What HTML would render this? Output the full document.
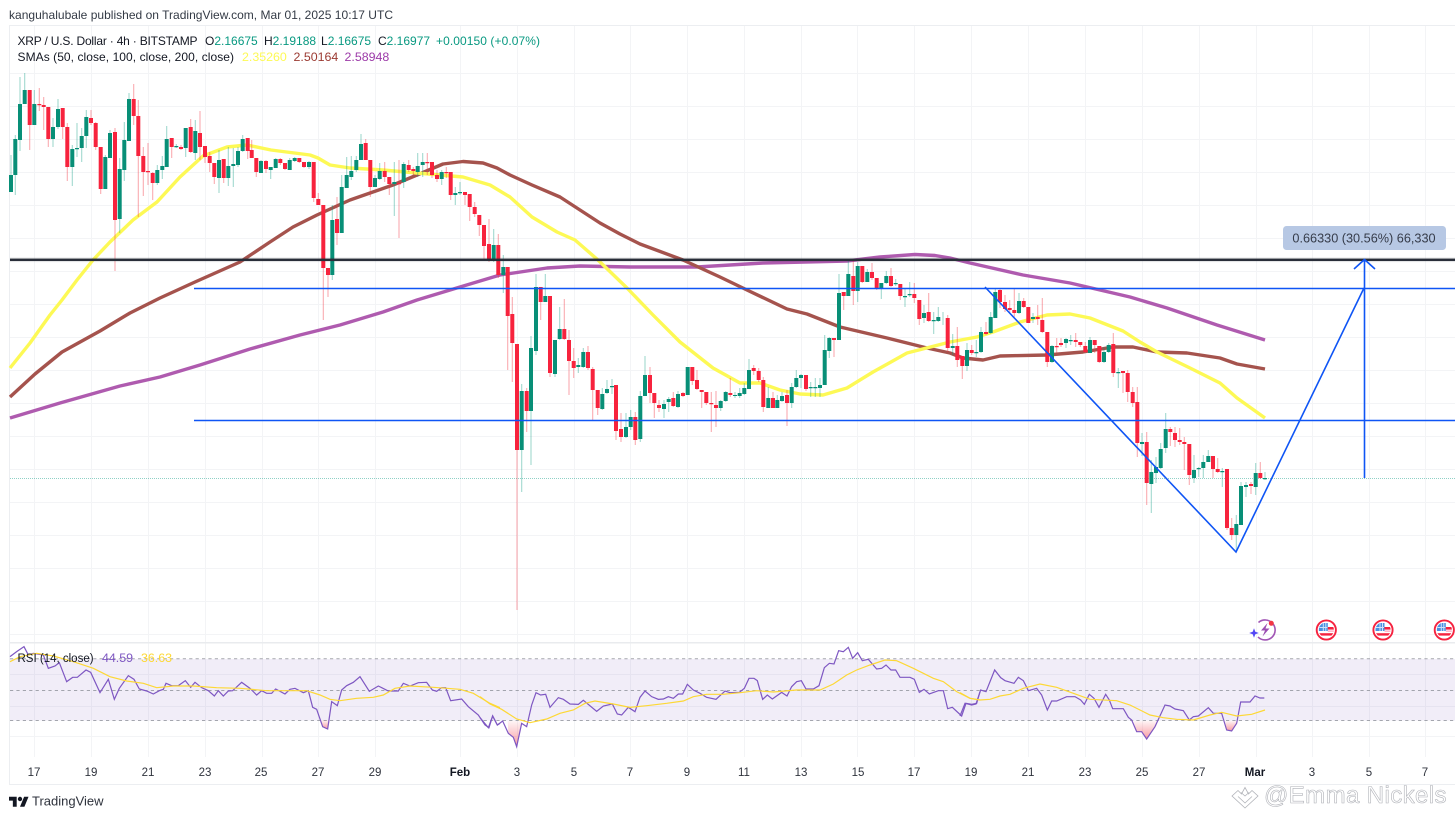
<!DOCTYPE html>
<html lang="en"><head><meta charset="utf-8"><title>XRP / U.S. Dollar chart</title>
<style>
html,body{margin:0;padding:0;background:#fff;width:1455px;height:818px;overflow:hidden}
svg{display:block;font-family:"Liberation Sans",sans-serif;filter:blur(.35px)}
.r{vector-effect:non-scaling-stroke;fill:none}
</style></head><body>
<svg width="1455" height="818" viewBox="0 0 1455 818" xmlns="http://www.w3.org/2000/svg">
<defs>
<linearGradient id="rg" x1="0" y1="0" x2="0" y2="1"><stop offset="0" stop-color="#f23645" stop-opacity=".05"/><stop offset="1" stop-color="#f23645" stop-opacity=".5"/></linearGradient>
<clipPath id="fc"><circle cx="0" cy="0" r="7.6"/></clipPath>
<g id="flag"><circle r="9.6" fill="#fff" stroke="#f5223f" stroke-width="1.9"/><g clip-path="url(#fc)"><rect x="-8" y="-8" width="16" height="16" fill="#fff"/><rect x="-7.5" y="-7" width="9" height="8" fill="#4a90e2"/><rect x="1.5" y="-3" width="7" height="2.6" fill="#f5223f"/><rect x="1.5" y="0.6" width="7" height="1" fill="#f8a"/><rect x="-8" y="3.2" width="16" height="2.4" fill="#f5223f"/><rect x="-3.5" y="-7" width="1" height="8" fill="#cfe3f8"/><rect x="-1" y="-7" width="1" height="8" fill="#cfe3f8"/><rect x="-7" y="-3" width="8" height="1" fill="#cfe3f8"/></g></g>
</defs>
<rect width="1455" height="818" fill="#fff"/>
<text x="9" y="19" font-size="12" fill="#333a45" textLength="384">kanguhalubale published on TradingView.com, Mar 01, 2025 10:17 UTC</text>
<path d="M9 25.5H1455M9.5 25V784M9 784.5H1455" stroke="#eceef1" stroke-width="1" fill="none"/>
<path d="M10 73.5H1455M10 106.5H1455M10 139.5H1455M10 172.5H1455M10 205.5H1455M10 238.5H1455M10 271.5H1455M10 304.5H1455M10 337.5H1455M10 370.5H1455M10 403.5H1455M10 436.5H1455M10 469.5H1455M10 502.5H1455M10 535.5H1455M10 568.5H1455M10 601.5H1455M10 634.5H1455M10 674.5H1455M10 706.5H1455M10 736.5H1455" stroke="#f3f4f6" stroke-width="1"/>
<path d="M34.5 26V757M91.5 26V757M148.5 26V757M205.5 26V757M262.5 26V757M318.5 26V757M375.5 26V757M460.5 26V757M517.5 26V757M574.5 26V757M630.5 26V757M687.5 26V757M744.5 26V757M801.5 26V757M857.5 26V757M914.5 26V757M971.5 26V757M1028.5 26V757M1085.5 26V757M1142.5 26V757M1199.5 26V757M1256.5 26V757M1312.5 26V757M1369.5 26V757M1425.5 26V757" stroke="#f3f4f6" stroke-width="1"/>
<rect x="10" y="642" width="1445" height="1.5" fill="#e9ebee"/>

<line x1="10" y1="478.5" x2="1455" y2="478.5" stroke="#089981" stroke-opacity=".45" stroke-width="1" stroke-dasharray="1 1"/>

<!-- SMAs below the candles -->
<polyline fill="none" stroke="#ab52ab" stroke-opacity=".95" stroke-width="3.4" stroke-linejoin="round" points="10,418 60,403 120,386 160,377 200,365 250,349 300,335 340,325 383,312 417,300 460,287 500,275 547,268 580,266 630,267 697,267 763,263 847,261 880,257 915,254.5 935,255.5 950,258 970,263 1023,275 1070,283 1130,297 1167,308 1217,325 1265,340"/>
<polyline fill="none" stroke="#a5534d" stroke-width="3.4" stroke-linejoin="round" points="10,397 35,374 62,352 100,331 130,313 160,298 195,282 240,262 270,242 293,227 317,215 350,200 393,185 417,175 443,164 463,161.5 483,163 497,168 510,175 532,185 560,197 580,210 600,223 620,234 640,244 683,260 720,277 747,290 787,309 807,314 840,327 887,338 927,348 950,353 963,358 983,360 1000,356 1047,355 1083,352 1113,347 1133,347 1157,352 1187,353 1220,358 1237,364 1265,369"/>
<polyline fill="none" stroke="#fdf955" stroke-width="3.4" stroke-linejoin="round" points="10,368 30,343 50,315 62,300 77,280 93,260 110,242 133,220 157,202 180,177 203,156 227,147 247,145 271,150 310,155 318,158 330,165 350,168 383,170 417,173 463,177 490,185 510,197 532,217 557,232 575,240 598,260 627,288 653,315 680,342 713,368 740,383 760,383 780,390 800,394 823,395 847,388 873,372 907,353 950,342 977,337 993,332 1020,322 1047,315 1070,314 1090,318 1123,331 1140,342 1157,352 1190,368 1220,383 1237,398 1265,418"/>

<!-- wicks -->
<path fill="none" stroke="#089981" stroke-opacity=".38" stroke-width="1.1" d="M11 155V192M15.3 135V195M20 77V151M24.7 73V104M34.3 90V125M53 118V147M58 99V129M72.3 145V186M77 123V157M81.7 128V162M86.3 110V148M105.3 155V189M110 130V158M119.7 158V233M124.3 122V181M129 93V141M157.3 165V185M162.3 156V179M166.7 126V167M176.3 144V148M185.7 128V157M195.3 120V160M219 150V193M228.3 147V186M233.3 148V187M238 147V167M242.7 135V152M261 160V173M270.7 167V179M275.7 158V168M289.7 158V170M294.7 157V162M309 161V169M332.3 205V280M341.7 175V233M346.7 157V188M351.3 156V180M356.3 156V172M361 134V160M375 175V187M379.7 163V180M394.3 162V216M403.7 162V188M417.7 153V177M422.7 153V177M441.7 170V185M455.3 187V205M460 182V195M493.7 229V262M503.3 255V293M521.7 384V492M531 336V465M536 274V355M545.3 274V302M555 340V377M559.7 307V340M578.3 358V373M583.3 348V368M602.3 388V410M607 380V394M612 379V394M626 413V438M630.7 410V430M640.3 391V442M645 356V396M664 400V418M668.7 397V412M678 391V408M687.7 367V395M720.7 400V411M725.7 391V402M735 392V398M739.7 388V398M744.3 383V395M749 359V389M768.3 387V408M777.3 395V408M782 392V402M791.7 383V408M796.3 370V388M801 374V388M810.7 382V397M815.3 378V397M820 378V397M824.7 335V385M829.3 337V358M839 274V340M848.3 260V296M857.7 262V302M867.3 269V282M881.3 283V299M886.3 271V284M895.7 279V286M905 288V307M909.7 282V297M924 305V323M933.7 312V334M938.3 307V322M943 312V325M952.7 334V355M967 343V371M976.3 340V357M981 327V353M990.7 312V334M995.3 288V318M1019 293V314M1033 313V323M1052 345V363M1066 338V348M1070.7 335V345M1090 337V353M1104 347V363M1108.7 343V353M1118.3 368V388M1142 433V456M1151.3 460V513M1156 457V483M1160.7 443V469M1165.7 413V453M1194 455V483M1198.7 467V477M1203.3 455V478M1208.3 450V462M1222.3 468V487M1236.3 515V552M1241 482V525M1246 482V497M1255.7 463V495M1265 472V480"/>
<path fill="none" stroke="#f23645" stroke-opacity=".42" stroke-width="1.1" d="M29.7 90V150M39.3 88V111M43.7 97V130M48.3 107V147M62.7 108V139M67.3 123V181M91 110V125M95.7 122V150M100.7 147V194M115 128V271M133.7 84V125M138.3 100V217M143.3 147V196M148 143V185M152.7 172V200M171.7 138V158M181 145V150M190.7 119V153M200 111V160M205 146V163M209.7 152V172M214.3 163V184M223.7 159V183M247.7 138V159M251.7 140V158M256.3 158V177M266 160V173M280.3 158V165M285 163V170M299.3 158V163M304 162V168M313.7 162V202M318.3 193V205M323.3 205V320M328 268V297M337 197V245M365.7 139V160M370.3 160V197M384.7 162V182M389.3 177V195M399 160V238M408.7 160V172M413.3 167V175M427.3 153V175M432 162V178M437 170V182M446.3 167V178M450.7 172V200M465 192V205M469.7 194V221M474.7 202V217M479.3 215V236M484 225V261M489 219V262M498.3 234V278M507.7 267V370M512.3 297V382M517 344V610M526.7 388V432M540.7 287V320M550 296V377M564.3 299V340M569 330V395M573.7 348V378M588 346V370M592.7 367V421M597.7 390V415M616 385V440M621 413V442M635.3 412V445M650 367V403M654.3 393V418M659 400V412M673.3 392V407M683 392V397M692.3 367V385M697 370V390M701.7 390V408M706.3 392V405M711.3 392V432M716 391V427M730.3 378V397M753.7 365V375M758.7 368V382M763.3 377V412M773 392V408M787 390V426M806 375V391M834 338V357M843.7 292V310M853.3 260V305M862.3 266V283M872 263V280M876.7 278V290M891 268V287M900.3 284V300M914.3 283V303M919.3 300V325M928.7 293V322M947.7 315V352M957.3 327V367M962.3 356V379M971.7 345V355M986 322V335M1000 288V308M1005 295V312M1009.7 300V313M1014.3 288V317M1023.7 298V308M1028.3 307V323M1037.7 305V325M1042.3 298V333M1047.3 332V367M1056.7 338V353M1061 338V347M1075.7 333V347M1080.3 342V347M1085.3 342V353M1094.7 340V353M1099.3 346V363M1113.3 333V377M1123 371V393M1127.7 370V402M1132.7 387V407M1137.3 387V457M1146.7 432V505M1170.3 427V446M1175 427V447M1179.7 428V445M1184.3 437V470M1189.3 444V485M1213 456V478M1217.7 458V473M1227 469V530M1231.7 518V540M1251 482V494M1260.3 462V479"/>
<!-- bodies -->
<path fill="none" stroke="#088f77" stroke-width="4" d="M11 175V192M15.3 139V175M20 104V140M24.7 90V104M34.3 104V125M53 127V139M58 109V127M72.3 149V167M77 148V149.2M81.7 136V148M86.3 117V136M105.3 157V189M110 133V158M119.7 169V219M124.3 140V170M129 99V141M157.3 170V183M162.3 166V170M166.7 139V167M176.3 146V147.2M185.7 128V148M195.3 131V153M219 160V178M228.3 166V178M233.3 164V166M238 151V165M242.7 139V151M261 161V173M270.7 167V170M275.7 159V168M289.7 160V170M294.7 158V161M309 162V167M332.3 220V275M341.7 187V233M346.7 175V188M351.3 171V177M356.3 160V170M361 144V160M375 178V187M379.7 171V179M394.3 182V184M403.7 164V182M417.7 166V172M422.7 162V165M441.7 172V179M455.3 193V195M460 192V193.2M493.7 245V261M503.3 267V275M521.7 391V450M531 348V411M536 287V351M545.3 296V302M555 340V374M559.7 329V339M578.3 365V367M583.3 352V367M602.3 394V409M607 389V393M612 386V387.2M626 427V437M630.7 417V427M640.3 396V439M645 375V396M664 404V409M668.7 399V402M678 394V407M687.7 367V395M720.7 401V408M725.7 392V401M735 395V396M739.7 393V396M744.3 388V394M749 370V389M768.3 398V408M777.3 400V408M782 396V401M791.7 387V403M796.3 378V387M801 375V378M810.7 387V388.2M815.3 387V388.2M820 385V388M824.7 350V385M829.3 338V351M839 293V340M848.3 274V296M857.7 266V291M867.3 272V282M881.3 283V289M886.3 276V283M895.7 283V284.2M905 296V297.2M909.7 294V295.2M924 313V318M933.7 320V321.2M938.3 317V321M952.7 346V348M967 350V366M976.3 352V353.2M981 332V352M990.7 317V333M995.3 292V318M1019 301V313M1033 317V319M1052 346V362M1066 339V343M1070.7 340V341.2M1090 340V353M1104 352V362M1108.7 345V352M1118.3 372V373.2M1142 442V444M1151.3 472V484M1156 467V473M1160.7 449V468M1165.7 429V448M1194 470V478M1198.7 468V469.2M1203.3 462V468M1208.3 456V462M1222.3 471V472.2M1236.3 524V535M1241 486V525M1246 485V487M1255.7 473V487M1265 478V479.2"/>
<path fill="none" stroke="#f7233d" stroke-width="4" d="M29.7 90V125M39.3 104V105.2M43.7 105V107M48.3 107V139M62.7 108V127M67.3 127V167M91 118V123M95.7 123V147M100.7 147V189M115 132V220M133.7 99V116M138.3 116V156M143.3 156V172M148 171V172.2M152.7 173V183M171.7 138V147M181 147V149M190.7 127V152M200 133V147M205 146V157M209.7 156V163M214.3 163V177M223.7 159V178M247.7 138V151M251.7 150V158M256.3 158V172M266 161V169M280.3 159V163M285 163V169M299.3 158V162M304 162V167M313.7 162V198M318.3 199V205M323.3 205V268M328 268V275M337 219V233M365.7 143V160M370.3 160V187M384.7 171V177M389.3 177V184M399 183V184.2M408.7 165V170M413.3 169V171M427.3 162V163.2M432 162V175M437 175V179M446.3 172V173.2M450.7 172V195M465 192V195M469.7 194V207M474.7 207V214M479.3 215V225M484 225V246M489 244V260M498.3 245V275M507.7 267V316M512.3 314V343M517 344V450M526.7 391V411M540.7 287V302M550 296V373M564.3 329V339M569 340V361M573.7 361V368M588 352V368M592.7 369V390M597.7 390V408M616 385V431M621 429V437M635.3 417V440M650 375V393M654.3 393V403M659 405V408M673.3 398V406M683 393V396M692.3 367V381M697 380V389M701.7 390V392M706.3 392V403M711.3 403V404.2M716 405V408M730.3 393V395M753.7 368V371M758.7 371V380M763.3 380V407M773 398V408M787 395V403M806 375V389M834 338V340M843.7 292V296M853.3 276V291M862.3 266V282M872 272V278M876.7 278V289M891 276V286M900.3 284V296M914.3 294V298M919.3 300V319M928.7 312V321M947.7 318V348M957.3 346V360M962.3 356V366M971.7 350V353M986 332V334M1000 290V302M1005 302V309M1009.7 308V310M1014.3 310V313M1023.7 301V307M1028.3 307V323M1037.7 317V319M1042.3 320V332M1047.3 332V362M1056.7 346V347.2M1061 343V345M1075.7 340V342M1080.3 342V345M1085.3 346V352M1094.7 340V345M1099.3 346V362M1113.3 344V373M1123 371V373M1127.7 373V392M1132.7 392V403M1137.3 402V443M1146.7 442V483M1170.3 429V432M1175 433V440M1179.7 440V442M1184.3 442V444M1189.3 444V475M1213 456V469M1217.7 469V472M1227 469V528M1231.7 528V535M1251 484V486M1260.3 473V478"/>

<!-- horizontal levels -->
<rect x="10" y="258.6" width="1445" height="2.4" fill="#2a2e39"/>
<rect x="10" y="257.5" width="1445" height="4.6" fill="#2a2e39" opacity=".12"/>
<path d="M194 288.5H1455M194 420.5H1455" stroke="#0f55f5" stroke-width="1.6" fill="none"/>

<!-- forecast drawing -->
<path d="M985 287L1236 552L1364 288" fill="none" stroke="#0f55f5" stroke-width="1.6"/>
<path d="M1364.5 478V260M1354 269L1364.5 259.5L1375 269" fill="none" stroke="#0f55f5" stroke-width="1.6"/>
<rect x="1283" y="226" width="163" height="24" rx="3.5" fill="#b7c8e4"/>
<text x="1364" y="242.5" font-size="12.7" text-anchor="middle" fill="#363c4a">0.66330 (30.56%) 66,330</text>

<!-- legend -->
<g font-size="12" fill="#131722">
<text x="17.5" y="45" textLength="180" lengthAdjust="spacing">XRP / U.S. Dollar · 4h · BITSTAMP</text>
<text x="205" y="45">O<tspan fill="#089981">2.16675</tspan></text>
<text x="264" y="45">H<tspan fill="#089981">2.19188</tspan></text>
<text x="321" y="45">L<tspan fill="#089981">2.16675</tspan></text>
<text x="378" y="45">C<tspan fill="#089981">2.16977</tspan></text>
<text x="436" y="45" fill="#089981" textLength="104">+0.00150 (+0.07%)</text>
<text x="17.5" y="61" textLength="216.5" lengthAdjust="spacing">SMAs (50, close, 100, close, 200, close)</text>
<text x="242" y="61" fill="#fdf955" font-size="12.4">2.35260</text>
<text x="293.5" y="61" fill="#9b3a32" font-size="12.4">2.50164</text>
<text x="344.5" y="61" fill="#9c3aa8" font-size="12.4">2.58948</text>
</g>

<!-- RSI pane -->
<rect x="10" y="659" width="1445" height="61.5" fill="#7e57c2" fill-opacity=".11"/>
<path d="M10 658.7H1455M10 690.5H1455M10 720.5H1455" stroke="#8e919a" stroke-width="1" stroke-dasharray="3.2 3.2" fill="none" opacity=".8"/>
<g transform="translate(480,620) scale(.33333)"><polygon points="83,303 125,303 110,380 100,352 85,340" fill="url(#rg)"/></g>
<g transform="translate(960,610) scale(.33333)"><polygon points="520,333 592,333 585,350 560,387 545,365 530,365" fill="url(#rg)"/><polygon points="795,333 835,333 830,340 815,363 800,360" fill="url(#rg)"/></g>
<g transform="translate(0,620) scale(.33333)">
<polygon points="962,300 990,300 983,327 968,320" fill="url(#rg)"/>
<polyline class="r" stroke="#7e57c2" stroke-width="1.2" points="30,110 50,95 72,80 85,105 100,100 130,105 145,145 165,138 178,128 200,185 218,172 232,172 258,150 272,157 300,218 325,178 343,238 358,205 385,167 402,178 418,207 440,213 460,222 478,212 490,208 498,190 515,197 535,197 556,182 572,202 585,187 605,203 625,212 643,228 655,212 670,228 685,213 698,212 725,187 750,205 770,225 785,212 800,220 815,220 827,207 855,222 870,208 885,205 910,218 925,212 938,262 950,268 968,320 983,327 995,245 1012,257 1025,210 1040,197 1060,187 1080,170 1108,214 1135,198 1165,213 1195,213 1210,190 1230,198 1255,188 1280,187 1297,210 1310,214 1325,203 1337,203 1352,242 1385,237 1405,260 1435,285 1455,315 1467,323 1478,288 1492,315 1500,310"/>
<polyline class="r" stroke="#fdd835" stroke-width="1.2" points="30,125 60,110 110,100 160,108 220,125 280,145 330,170 380,183 430,190 470,203 520,198 580,198 650,203 720,205 800,212 860,212 920,212 960,225 990,238 1020,242 1070,235 1120,232 1150,225 1185,205 1230,198 1300,202 1380,208 1420,220 1470,250 1500,263"/>
</g>
<g transform="translate(480,620) scale(.33333)">
<polyline class="r" stroke="#7e57c2" stroke-width="1.2" points="0,293 25,323 38,288 52,315 68,303 85,340 100,352 110,380 125,310 140,320 155,255 168,218 182,225 197,223 210,262 235,233 250,238 270,252 295,253 310,241 350,274 370,258 397,252 412,282 425,285 445,262 465,275 480,232 495,213 515,230 535,238 550,237 565,230 580,235 595,222 608,222 622,193 640,210 660,220 680,232 708,238 735,213 750,218 778,217 793,205 807,175 822,175 832,182 848,238 862,225 877,237 905,217 921,228 935,200 950,185 964,182 978,207 1000,207 1017,197 1033,143 1048,130 1062,132 1076,92 1090,95 1105,82 1118,115 1133,98 1147,122 1165,118 1190,147 1205,145 1218,135 1233,150 1247,150 1260,172 1290,172 1303,178 1318,217 1332,208 1348,222 1375,212 1390,212 1403,266 1417,262 1445,288 1458,250 1475,253 1490,250 1500,215"/>
<polyline class="r" stroke="#fdd835" stroke-width="1.2" points="0,230 30,252 65,268 110,297 150,308 200,297 240,280 280,270 315,250 345,243 400,252 450,262 500,257 560,250 610,243 640,230 680,223 730,223 780,218 830,212 880,216 950,210 1020,210 1060,192 1100,165 1130,150 1170,135 1215,120 1250,122 1300,145 1360,175 1390,185 1430,215 1470,235 1500,240"/>
</g>
<g transform="translate(960,610) scale(.33333)">
<polyline class="r" stroke="#7e57c2" stroke-width="1.2" points="0,318 15,280 35,285 48,282 62,240 78,245 104,180 122,203 135,212 162,220 175,202 190,212 205,242 230,235 245,255 262,300 275,273 290,273 320,260 345,260 362,270 373,283 388,253 402,265 417,292 437,253 448,270 458,296 490,296 505,322 515,330 530,365 545,365 560,387 585,350 615,285 630,288 645,297 670,302 688,330 700,320 715,318 745,293 760,310 785,310 800,360 815,363 830,340 842,276 870,276 885,258 900,264 913,264"/>
<polyline class="r" stroke="#fdd835" stroke-width="1.2" points="0,248 30,265 60,270 90,268 120,258 150,253 190,235 240,222 290,232 340,250 390,268 470,272 510,285 570,315 610,323 650,328 700,330 750,315 785,307 830,318 875,313 915,300"/>
</g>
<text x="17.5" y="662" font-size="11.5" fill="#131722">RSI (14, close)</text>
<text x="102" y="662" font-size="12.4" fill="#7e57c2">44.59</text>
<text x="141" y="662" font-size="12.4" fill="#fdd835">36.63</text>

<!-- time axis -->
<g font-size="11.5" fill="#2f333d" text-anchor="middle">
<text x="34" y="776">17</text><text x="91" y="776">19</text><text x="148" y="776">21</text><text x="205" y="776">23</text><text x="261" y="776">25</text><text x="318" y="776">27</text><text x="375" y="776">29</text><text x="460" y="776" font-weight="bold" fill="#131722">Feb</text><text x="517" y="776">3</text><text x="574" y="776">5</text><text x="630" y="776">7</text><text x="687" y="776">9</text><text x="744" y="776">11</text><text x="801" y="776">13</text><text x="858" y="776">15</text><text x="914" y="776">17</text><text x="971" y="776">19</text><text x="1028" y="776">21</text><text x="1085" y="776">23</text><text x="1142" y="776">25</text><text x="1199" y="776">27</text><text x="1255" y="776" font-weight="bold" fill="#131722">Mar</text><text x="1312" y="776">3</text><text x="1369" y="776">5</text><text x="1425" y="776">7</text>
</g>

<!-- event icons -->
<path d="M1258.5 622.5A10 10 0 1 1 1258 637" fill="none" stroke="#a156b5" stroke-width="1.6"/>
<path d="M1267.5 623L1261 630.5H1265L1262.5 636.5L1269.5 628.5H1265.5Z" fill="#9c4fb3"/>
<path d="M1254 628.2L1255.3 631.7L1258.8 633L1255.3 634.3L1254 637.8L1252.7 634.3L1249.2 633L1252.7 631.7Z" fill="#5346f5"/>
<circle cx="1271.3" cy="623.3" r="2.5" fill="#f23645"/>
<use href="#flag" x="1326.3" y="630"/>
<use href="#flag" x="1383" y="630"/>
<use href="#flag" x="1444.3" y="630"/>

<!-- TradingView logo -->
<g transform="translate(9,794.6) scale(.55)" fill="#131722"><path d="M14 22H7V11H0V4h14v18zM28 22h-8l7.5-18h8L28 22z"/><circle cx="20" cy="8" r="4"/></g>
<text x="32" y="805.5" font-size="13" fill="#2e323c">TradingView</text>

<!-- watermark -->
<g fill="none" stroke="#b0b2b8" stroke-width=".8">
<path d="M1232 796L1238 790.5L1241.5 794L1245 787.5L1248.5 794L1252 790.5L1258 796L1245 808Z" fill="#fff"/>
<path d="M1238 796.5L1245 803L1252 796.5M1241 792.5L1245 796L1249 792.5"/>
</g>
<text x="1264" y="803" font-size="24" letter-spacing=".4" fill="#fff" stroke="#b0b2b8" stroke-width=".6">@Emma Nickels</text>
</svg>
</body></html>
